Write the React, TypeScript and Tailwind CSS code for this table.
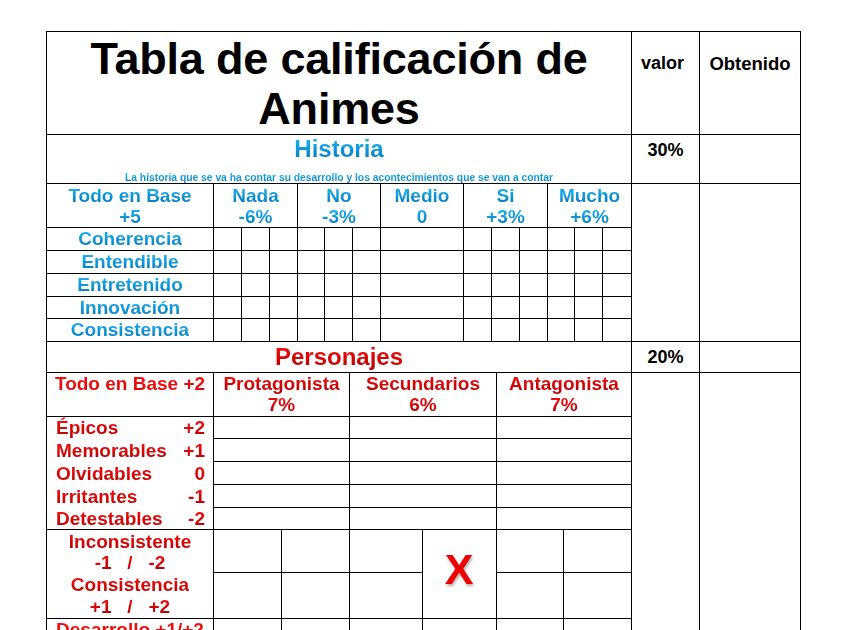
import React from 'react'

const B = 'border-r border-b border-black'

function Blue({ children, className = '' }: { children: React.ReactNode; className?: string }) {
  return (
    <span className={`block whitespace-pre bg-linear-to-b from-[#1cbdfc] to-[#0672b6] bg-clip-text text-transparent ${className}`}>
      {children}
    </span>
  )
}

function Red({ children, className = '' }: { children: React.ReactNode; className?: string }) {
  return (
    <span className={`block whitespace-pre bg-linear-to-b from-[#ff1010] to-[#b00000] bg-clip-text text-transparent ${className}`}>
      {children}
    </span>
  )
}

const historiaCols = [
  { top: 'Nada', bottom: '-6%', span: 'col-span-3' },
  { top: 'No', bottom: '-3%', span: 'col-span-3' },
  { top: 'Medio', bottom: '0', span: 'col-span-1' },
  { top: 'Si', bottom: '+3%', span: 'col-span-3' },
  { top: 'Mucho', bottom: '+6%', span: 'col-span-3' },
]

const historiaRows = ['Coherencia', 'Entendible', 'Entretenido', 'Innovación', 'Consistencia']

const personajesRows = [
  { label: 'Épicos', value: '+2' },
  { label: 'Memorables', value: '+1' },
  { label: 'Olvidables', value: '0' },
  { label: 'Irritantes', value: '-1' },
  { label: 'Detestables', value: '-2' },
]

export default function App() {
  return (
    <div className="h-[630px] overflow-hidden bg-white pl-[46px] pt-[31px] font-['Liberation_Sans',Arial,sans-serif] font-bold text-black">
      <div className="w-[755px] border-l border-t border-black">
        {/* title */}
        <div className="flex h-[103px]">
          <div className={`${B} w-[585px] pt-[2px] text-center text-[45px] leading-[50px] tracking-[-0.2px]`}>
            Tabla de calificación de
            <br />
            Animes
          </div>
          <div className={`${B} w-[68px] pr-[6px] pt-[18px] text-center text-[18px]`}>valor</div>
          <div className={`${B} w-[101px] pt-[18px] text-center text-[18.5px]`}>Obtenido</div>
        </div>

        {/* historia */}
        <div className="flex h-[49px]">
          <div className={`${B} flex w-[585px] flex-col items-center justify-between`}>
            <Blue className="text-[24px] leading-[28px]">Historia</Blue>
            <Blue className="text-[10.3px] leading-[11px]">
              La historia que se va ha contar su desarrollo y los acontecimientos que se van a contar
            </Blue>
          </div>
          <div className={`${B} w-[68px] pt-[2px] text-center text-[18px]`}>30%</div>
          <div className={`${B} w-[101px]`} />
        </div>

        <div className="flex h-[158px]">
          <div className="grid w-[585px] grid-cols-[167px_28px_28px_28px_27px_28px_28px_83px_28px_28px_28px_27px_28px_29px] grid-rows-[44px_23px_23px_23px_22px_23px] text-[19px]">
            <div className={`${B} flex flex-col items-center justify-center leading-[21px]`}>
              <Blue>Todo en Base</Blue>
              <Blue>+5</Blue>
            </div>
            {historiaCols.map((c) => (
              <div key={c.top} className={`${B} ${c.span} flex flex-col items-center justify-center leading-[21px]`}>
                <Blue>{c.top}</Blue>
                <Blue>{c.bottom}</Blue>
              </div>
            ))}
            {historiaRows.map((r) => (
              <React.Fragment key={r}>
                <div className={`${B} flex items-center justify-center leading-[22px]`}>
                  <Blue>{r}</Blue>
                </div>
                {Array.from({ length: 13 }).map((_, i) => (
                  <div key={i} className={B} />
                ))}
              </React.Fragment>
            ))}
          </div>
          <div className={`${B} w-[68px]`} />
          <div className={`${B} w-[101px]`} />
        </div>

        {/* personajes */}
        <div className="flex h-[31px]">
          <div className={`${B} flex w-[585px] items-center justify-center`}>
            <Red className="text-[24px] leading-[28px]">Personajes</Red>
          </div>
          <div className={`${B} w-[68px] pt-[2px] text-center text-[18px]`}>20%</div>
          <div className={`${B} w-[101px]`} />
        </div>

        <div className="flex h-[330px]">
          <div className="grid w-[585px] grid-cols-[167px_68px_68px_73px_74px_67px_68px] grid-rows-[44px_22px_23px_23px_23px_22px_43px_46px_44px] content-start text-[19px] leading-[21px]">
            <div className={`${B} flex justify-center`}>
              <Red>Todo en Base +2</Red>
            </div>
            {[
              ['Protagonista', '7%'],
              ['Secundarios', '6%'],
              ['Antagonista', '7%'],
            ].map(([t, p]) => (
              <div key={t} className={`${B} col-span-2 flex flex-col items-center`}>
                <Red>{t}</Red>
                <Red>{p}</Red>
              </div>
            ))}

            {personajesRows.map((r, i) => (
              <React.Fragment key={r.label}>
                <div
                  className={`flex items-center justify-between border-r border-black pl-[9px] pr-[8px] leading-[22px] ${
                    i === personajesRows.length - 1 ? 'border-b' : ''
                  }`}
                >
                  <Red>{r.label}</Red>
                  <Red>{r.value}</Red>
                </div>
                <div className={`${B} col-span-2`} />
                <div className={`${B} col-span-2`} />
                <div className={`${B} col-span-2`} />
              </React.Fragment>
            ))}

            <div className={`${B} row-span-2 flex flex-col items-center justify-center leading-[21.7px]`}>
              <Red>Inconsistente</Red>
              <Red>{'-1   /   -2'}</Red>
              <Red>Consistencia</Red>
              <Red>{'+1   /   +2'}</Red>
            </div>
            <div className={B} />
            <div className={B} />
            <div className={B} />
            <div className={`${B} row-span-2 flex items-center justify-center pb-[9px] pr-[1px]`}>
              <span className="text-[43px] leading-none text-[#ee0000] drop-shadow-[1px_2px_1.5px_rgba(0,0,0,0.35)]">
                X
              </span>
            </div>
            <div className={B} />
            <div className={B} />
            <div className={B} />
            <div className={B} />
            <div className={B} />
            <div className={B} />
            <div className={B} />

            <div className={`${B} flex justify-center leading-[22px]`}>
              <Red>Desarrollo +1/+2</Red>
            </div>
            {Array.from({ length: 6 }).map((_, i) => (
              <div key={i} className={B} />
            ))}
          </div>
          <div className={`${B} w-[68px]`} />
          <div className={`${B} w-[101px]`} />
        </div>
      </div>
    </div>
  )
}
